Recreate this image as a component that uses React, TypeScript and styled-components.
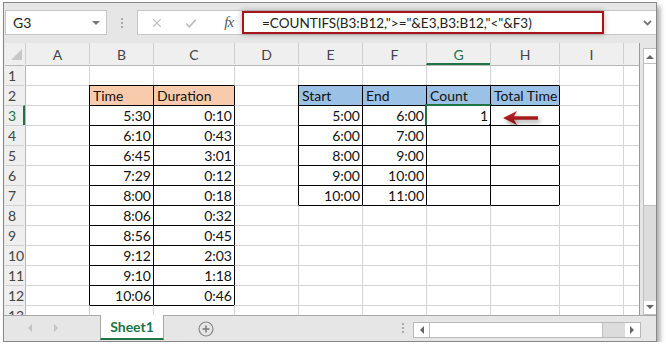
import React from "react";
import styled, { createGlobalStyle } from "styled-components";

const GREEN = "#217346";
const GRID = "#d4d4d4";
const HEAD_LINE = "#b8b8b8";
const CHROME = "#e6e6e6";

const GlobalStyle = createGlobalStyle`
  html, body { margin: 0; padding: 0; background: #fff; }
  body { font-family: Lato, "Liberation Sans", sans-serif; }
`;

const Window = styled.div`
  margin: 2px 0 0 3px;
  width: 654px;
  height: 340px;
  box-sizing: border-box;
  border: 1px solid #8a8a8a;
  background: ${CHROME};
  box-shadow: 3px 4px 5px rgba(0, 0, 0, 0.35);
  display: flex;
  flex-direction: column;
`;

const FormulaRow = styled.div`
  height: 40px;
  box-sizing: border-box;
  padding: 7px 0 0 1px;
  display: flex;
  align-items: flex-start;
`;

const NameBox = styled.div`
  width: 102px;
  height: 25px;
  box-sizing: border-box;
  border: 1px solid #c6c6c6;
  background: #fff;
  display: flex;
  align-items: center;
  justify-content: space-between;
  padding: 0 6px 0 7px;
  font-size: 14px;
  color: #222;
`;

const DropTri = styled.span`
  width: 0;
  height: 0;
  border-left: 4px solid transparent;
  border-right: 4px solid transparent;
  border-top: 4px solid #777;
`;

const Dots = styled.div`
  width: 30px;
  height: 25px;
  display: flex;
  flex-direction: column;
  align-items: center;
  justify-content: center;
  gap: 2px;
  span {
    width: 2px;
    height: 2px;
    background: #aaa;
  }
`;

const FormulaBox = styled.div`
  flex: 1;
  height: 25px;
  box-sizing: border-box;
  border: 1px solid #c6c6c6;
  border-right: none;
  background: #fff;
  display: flex;
  align-items: center;
`;

const IconArea = styled.div`
  width: 104px;
  box-sizing: border-box;
  padding-left: 14px;
  display: flex;
  align-items: center;
`;

const Fx = styled.span`
  font-family: "Liberation Serif", serif;
  font-style: italic;
  font-size: 15px;
  color: #555;
  width: 12px;
  margin-left: 28px;
  margin-right: 6px;
  letter-spacing: -1px;
`;

const RedBox = styled.div`
  width: 362px;
  height: 23px;
  box-sizing: border-box;
  border: 2px solid #a8141b;
  box-shadow: 0 0 6px rgba(0, 0, 0, 0.3);
  padding-left: 18px;
  display: flex;
  align-items: center;
  font-size: 13.5px;
  color: #222;
  white-space: nowrap;
`;

const Chevron = styled.svg`
  margin-left: auto;
  margin-right: 4px;
`;

const SheetArea = styled.div`
  height: 272px;
  display: flex;
  align-items: flex-start;
`;

const Grid = styled.div`
  margin-left: 1px;
  width: 635px;
  height: 272px;
  box-sizing: border-box;
  border-right: 1px solid #9a9a9a;
  overflow: hidden;
  display: grid;
  grid-template-columns: 20px 64px 64px 81px 64px 64px 64px 64px 69px 64px 16px;
  grid-template-rows: 22px repeat(13, 20px);
  background: #fff;
`;

const ColHead = styled.div<{ $sel?: boolean; $corner?: boolean }>`
  box-sizing: border-box;
  background: #efefef;
  border-left: ${(p) => (p.$corner ? "none" : "1px solid #cfcfcf")};
  border-bottom: 2px solid ${(p) => (p.$sel ? GREEN : "transparent")};
  color: ${(p) => (p.$sel ? GREEN : "#444")};
  font-size: 14px;
  display: flex;
  align-items: center;
  justify-content: center;
  padding-top: 2px;
  position: relative;
`;

const CornerTri = styled.span`
  position: absolute;
  right: 3px;
  bottom: 3px;
  width: 0;
  height: 0;
  border-left: 11px solid transparent;
  border-bottom: 11px solid #c8c8c8;
`;

const RowHead = styled.div<{ $sel?: boolean; $first?: boolean }>`
  box-sizing: border-box;
  background: #efefef;
  border-top: 1px solid ${(p) => (p.$first ? HEAD_LINE : "#cfcfcf")};
  border-right: 2px solid ${(p) => (p.$sel ? GREEN : "transparent")};
  color: ${(p) => (p.$sel ? GREEN : "#444")};
  font-size: 14px;
  line-height: 19px;
  padding-left: 3px;
`;

const Cell = styled.div<{
  $left: string;
  $top: string;
  $fill?: string;
  $right?: boolean;
}>`
  box-sizing: border-box;
  border-left: 1px solid ${(p) => p.$left};
  border-top: 1px solid ${(p) => p.$top};
  background: ${(p) => p.$fill ?? "#fff"};
  font-size: 14px;
  line-height: 20px;
  color: #111;
  text-align: ${(p) => (p.$right ? "right" : "left")};
  padding: 0 2px 0 3px;
  white-space: nowrap;
  position: relative;
`;

const SelBox = styled.span`
  position: absolute;
  left: -2px;
  top: -2px;
  right: -2px;
  bottom: -2px;
  border: 2px solid ${GREEN};
  pointer-events: none;
`;

const FillHandle = styled.span`
  position: absolute;
  right: -5px;
  bottom: -5px;
  width: 5px;
  height: 5px;
  background: ${GREEN};
  border: 1px solid #fff;
`;

const Arrow = styled.svg`
  position: absolute;
  left: 12px;
  top: 4px;
  filter: drop-shadow(2px 3px 2px rgba(0, 0, 0, 0.35));
`;

const VScroll = styled.div`
  margin: 5px 0 0 3px;
  width: 13px;
  height: 267px;
  box-sizing: border-box;
  border: 1px solid #c0c0c0;
  border-right: none;
  background: #dcdcdc;
  display: flex;
  flex-direction: column;
`;

const ScrollBtn = styled.div<{ $w?: number; $h?: number }>`
  width: ${(p) => (p.$w ? `${p.$w}px` : "auto")};
  height: ${(p) => (p.$h ? `${p.$h}px` : "auto")};
  box-sizing: border-box;
  background: #fff;
  display: flex;
  align-items: center;
  justify-content: center;
  flex-shrink: 0;
`;

const VThumb = styled.div`
  height: 143px;
  background: #fff;
  border-top: 1px solid #c0c0c0;
  border-bottom: 1px solid #c0c0c0;
  box-sizing: border-box;
`;

const TabBar = styled.div`
  flex: 1;
  border-top: 1px solid #a8a8a8;
  display: flex;
  align-items: flex-start;
`;

const NavArea = styled.div`
  width: 96px;
  height: 24px;
  display: flex;
  align-items: center;
  padding-left: 24px;
  box-sizing: border-box;
  gap: 22px;
`;

const NavTri = styled.span<{ $dir: "l" | "r" }>`
  width: 0;
  height: 0;
  border-top: 4px solid transparent;
  border-bottom: 4px solid transparent;
  ${(p) =>
    p.$dir === "l"
      ? "border-right: 4px solid #c4c4c4;"
      : "border-left: 4px solid #c4c4c4;"}
`;

const SheetTab = styled.div`
  margin-top: -1px;
  width: 64px;
  height: 25px;
  box-sizing: border-box;
  background: #fff;
  border-left: 1px solid #a8a8a8;
  border-right: 1px solid #a8a8a8;
  border-bottom: 2px solid ${GREEN};
  color: ${GREEN};
  font-weight: bold;
  font-size: 14px;
  display: flex;
  align-items: center;
  justify-content: center;
`;

const PlusBtn = styled.svg`
  margin: 5px 0 0 34px;
`;

const HDots = styled(Dots)`
  margin-left: auto;
  width: 14px;
  height: 24px;
`;

const HScroll = styled.div`
  margin: 6px 15px 0 3px;
  width: 228px;
  height: 16px;
  box-sizing: border-box;
  border: 1px solid #b8b8b8;
  background: #dcdcdc;
  display: flex;
`;

const HThumb = styled.div`
  width: 174px;
  background: #fff;
  border-left: 1px solid #c0c0c0;
  border-right: 1px solid #c0c0c0;
  box-sizing: border-box;
`;

const LETTERS = ["A", "B", "C", "D", "E", "F", "G", "H", "I", ""];

const CELLS: Record<string, string> = {
  "2,2": "Time",
  "2,3": "Duration",
  "2,5": "Start",
  "2,6": "End",
  "2,7": "Count",
  "2,8": "Total Time",
  "3,7": "1",
};

const TIMES = [
  ["5:30", "0:10"],
  ["6:10", "0:43"],
  ["6:45", "3:01"],
  ["7:29", "0:12"],
  ["8:00", "0:18"],
  ["8:06", "0:32"],
  ["8:56", "0:45"],
  ["9:12", "2:03"],
  ["9:10", "1:18"],
  ["10:06", "0:46"],
];
const RANGES = [
  ["5:00", "6:00"],
  ["6:00", "7:00"],
  ["8:00", "9:00"],
  ["9:00", "10:00"],
  ["10:00", "11:00"],
];
TIMES.forEach(([a, b], i) => {
  CELLS[`${i + 3},2`] = a;
  CELLS[`${i + 3},3`] = b;
});
RANGES.forEach(([a, b], i) => {
  CELLS[`${i + 3},5`] = a;
  CELLS[`${i + 3},6`] = b;
});

const inTable = (r: number, c: number) =>
  (r >= 2 && r <= 12 && c >= 2 && c <= 3) ||
  (r >= 2 && r <= 7 && c >= 5 && c <= 8);

const headFill = (r: number, c: number) => {
  if (r !== 2) return undefined;
  if (c >= 2 && c <= 3) return "#f8cbad";
  if (c >= 5 && c <= 8) return "#9bc2e6";
  return undefined;
};

function SheetCell({ r, c }: { r: number; c: number }) {
  const left =
    inTable(r, c) || inTable(r, c - 1) ? "#000" : c === 1 ? HEAD_LINE : GRID;
  const top =
    inTable(r, c) || inTable(r - 1, c) ? "#000" : r === 1 ? HEAD_LINE : GRID;
  const text = CELLS[`${r},${c}`] ?? "";
  const selected = r === 3 && c === 7;
  return (
    <Cell $left={left} $top={top} $fill={headFill(r, c)} $right={r !== 2}>
      {text}
      {selected && (
        <>
          <SelBox />
          <FillHandle />
        </>
      )}
      {r === 3 && c === 8 && (
        <Arrow width="38" height="16" viewBox="0 0 38 16">
          <defs>
            <linearGradient id="ar" x1="0" y1="0" x2="0" y2="1">
              <stop offset="0" stopColor="#c0262b" />
              <stop offset="1" stopColor="#8c0f12" />
            </linearGradient>
          </defs>
          <path d="M0 8 L14 1 L11 6.3 L35 6.3 L35 9.7 L11 9.7 L14 15 Z" fill="url(#ar)" />
        </Arrow>
      )}
    </Cell>
  );
}

export default function App() {
  const rows = Array.from({ length: 13 }, (_, i) => i + 1);
  return (
    <>
      <GlobalStyle />
      <Window>
        <FormulaRow>
          <NameBox>
            G3
            <DropTri />
          </NameBox>
          <Dots>
            <span />
            <span />
            <span />
          </Dots>
          <FormulaBox>
            <IconArea>
              <svg width="10" height="10" viewBox="0 0 10 10">
                <path d="M1 1 L9 9 M9 1 L1 9" stroke="#bdbdbd" strokeWidth="1.3" />
              </svg>
              <svg width="12" height="10" viewBox="0 0 12 10" style={{ marginLeft: 23 }}>
                <path d="M1 5.5 L4.5 9 L11 1.5" stroke="#bdbdbd" strokeWidth="1.6" fill="none" />
              </svg>
              <Fx>fx</Fx>
            </IconArea>
            <RedBox>=COUNTIFS(B3:B12,"&gt;="&amp;E3,B3:B12,"&lt;"&amp;F3)</RedBox>
            <Chevron width="9" height="6" viewBox="0 0 9 6">
              <path d="M1 1 L4.5 4.5 L8 1" stroke="#777" strokeWidth="1.8" fill="none" />
            </Chevron>
          </FormulaBox>
        </FormulaRow>

        <SheetArea>
          <Grid>
            <ColHead $corner>
              <CornerTri />
            </ColHead>
            {LETTERS.map((l, i) => (
              <ColHead key={i} $sel={l === "G"}>
                {l}
              </ColHead>
            ))}
            {rows.map((r) => (
              <React.Fragment key={r}>
                <RowHead $sel={r === 3} $first={r === 1}>
                  {r}
                </RowHead>
                {LETTERS.map((_, i) => (
                  <SheetCell key={i} r={r} c={i + 1} />
                ))}
              </React.Fragment>
            ))}
          </Grid>
          <VScroll>
            <ScrollBtn $h={14}>
              <svg width="8" height="5" viewBox="0 0 8 5">
                <path d="M0 5 L4 1 L8 5 Z" fill="#666" />
              </svg>
            </ScrollBtn>
            <VThumb />
            <div style={{ flex: 1 }} />
            <ScrollBtn $h={13}>
              <svg width="8" height="5" viewBox="0 0 8 5">
                <path d="M0 0 L4 4 L8 0 Z" fill="#666" />
              </svg>
            </ScrollBtn>
          </VScroll>
        </SheetArea>

        <TabBar>
          <NavArea>
            <NavTri $dir="l" />
            <NavTri $dir="r" />
          </NavArea>
          <SheetTab>Sheet1</SheetTab>
          <PlusBtn width="16" height="16" viewBox="0 0 16 16">
            <circle cx="8" cy="8" r="7" stroke="#888" strokeWidth="1.2" fill="none" />
            <path d="M8 4.5 V11.5 M4.5 8 H11.5" stroke="#777" strokeWidth="1.5" />
          </PlusBtn>
          <HDots>
            <span />
            <span />
            <span />
          </HDots>
          <HScroll>
            <ScrollBtn $w={15}>
              <svg width="5" height="8" viewBox="0 0 5 8">
                <path d="M5 0 L1 4 L5 8 Z" fill="#666" />
              </svg>
            </ScrollBtn>
            <HThumb />
            <div style={{ flex: 1 }} />
            <ScrollBtn $w={15}>
              <svg width="5" height="8" viewBox="0 0 5 8">
                <path d="M0 0 L4 4 L0 8 Z" fill="#666" />
              </svg>
            </ScrollBtn>
          </HScroll>
        </TabBar>
      </Window>
    </>
  );
}
